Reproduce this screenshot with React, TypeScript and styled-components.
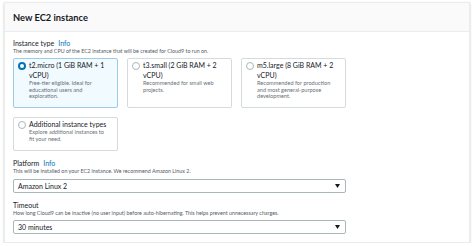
import React from "react";
import styled, { createGlobalStyle } from "styled-components";

const Global = createGlobalStyle`
  html, body { margin: 0; padding: 0; background: #ffffff; }
  body { font-family: Lato, "Open Sans", Arial, sans-serif; color: #16191f; }
  * { box-sizing: border-box; }
`;

const Card = styled.div`
  margin: 2px 4px 0 4px;
  width: 466px;
  border: 1px solid #eaeded;
  box-shadow: 0 1px 2px rgba(0, 28, 36, 0.25);
  background: #fff;
  display: flex;
  flex-direction: column;
`;

const Header = styled.div`
  height: 29px;
  background: #fafafa;
  border-bottom: 1px solid #eaeded;
  padding: 0 8px;
  display: flex;
  align-items: center;
`;

const Title = styled.h2`
  margin: 0;
  font-size: 9.3px;
  font-weight: 700;
  color: #16191f;
`;

const Body = styled.div`
  padding: 7px 8px 8px 8px;
  display: flex;
  flex-direction: column;
`;

const Field = styled.div<{ $mt?: number }>`
  display: flex;
  flex-direction: column;
  margin-top: ${(p) => p.$mt ?? 0}px;
`;

const Label = styled.div`
  font-size: 7px;
  line-height: 8px;
  height: 8px;
  color: #16191f;
  display: flex;
  gap: 4px;
`;

const Info = styled.span`
  color: #0073bb;
`;

const Desc = styled.div`
  margin-top: 1px;
  font-size: 5.35px;
  line-height: 7px;
  height: 7px;
  color: #545b64;
  white-space: nowrap;
`;

const Tiles = styled.div`
  display: grid;
  grid-template-columns: repeat(3, 105px);
  column-gap: 9px;
  row-gap: 9px;
  margin-top: 3px;
`;

const Tile = styled.div<{ $selected?: boolean; $h: number }>`
  height: ${(p) => p.$h}px;
  border: 1px solid ${(p) => (p.$selected ? "#9ccbea" : "#d5dbdb")};
  background: ${(p) => (p.$selected ? "#f1faff" : "#fff")};
  border-radius: 2px;
  padding: 1px 10px 0 4px;
  display: flex;
  gap: 3px;
`;

const Radio = styled.span<{ $checked?: boolean }>`
  flex: none;
  width: 8px;
  height: 8px;
  margin-top: 1.5px;
  border-radius: 50%;
  border: ${(p) => (p.$checked ? "2.5px solid #0073bb" : "1px solid #aab7b8")};
  background: #fff;
`;

const TileText = styled.div`
  display: flex;
  flex-direction: column;
`;

const TileTitle = styled.div`
  font-size: 7px;
  line-height: 10px;
  color: #16191f;
`;

const TileDesc = styled.div`
  font-size: 5.6px;
  line-height: 6.7px;
  color: #687078;
`;

const Select = styled.div<{ $mt: number }>`
  width: 333px;
  height: 14px;
  margin-top: ${(p) => p.$mt}px;
  border: 1px solid #aab7b8;
  border-radius: 2px;
  padding: 0 5px 0 4px;
  display: flex;
  align-items: center;
  justify-content: space-between;
  font-size: 7px;
  color: #16191f;
`;

const Arrow = styled.svg`
  width: 5px;
  height: 4px;
  fill: #16191f;
`;

type TileData = { title: string; desc: string; selected?: boolean };

const tiles: TileData[] = [
  { title: "t2.micro (1 GiB RAM + 1 vCPU)", desc: "Free-tier eligible. Ideal for educational users and exploration.", selected: true },
  { title: "t3.small (2 GiB RAM + 2 vCPU)", desc: "Recommended for small web projects." },
  { title: "m5.large (8 GiB RAM + 2 vCPU)", desc: "Recommended for production and most general-purpose development." },
  { title: "Additional instance types", desc: "Explore additional instances to fit your need." },
];

const Caret = () => (
  <Arrow viewBox="0 0 5 4">
    <polygon points="0,0 5,0 2.5,4" />
  </Arrow>
);

export default function App() {
  return (
    <>
      <Global />
      <Card>
        <Header>
          <Title>New EC2 instance</Title>
        </Header>
        <Body>
          <Field>
            <Label>
              Instance type <Info>Info</Info>
            </Label>
            <Desc>The memory and CPU of the EC2 instance that will be created for Cloud9 to run on.</Desc>
            <Tiles>
              {tiles.map((t, i) => (
                <Tile key={t.title} $selected={t.selected} $h={i < 3 ? 50 : 34}>
                  <Radio $checked={t.selected} />
                  <TileText>
                    <TileTitle>{t.title}</TileTitle>
                    <TileDesc>{t.desc}</TileDesc>
                  </TileText>
                </Tile>
              ))}
            </Tiles>
          </Field>
          <Field $mt={8}>
            <Label>
              Platform <Info>Info</Info>
            </Label>
            <Desc>This will be installed on your EC2 instance. We recommend Amazon Linux 2.</Desc>
            <Select $mt={4}>
              Amazon Linux 2<Caret />
            </Select>
          </Field>
          <Field $mt={8}>
            <Label>Timeout</Label>
            <Desc>How long Cloud9 can be inactive (no user input) before auto-hibernating. This helps prevent unnecessary charges.</Desc>
            <Select $mt={3}>
              30 minutes<Caret />
            </Select>
          </Field>
        </Body>
      </Card>
    </>
  );
}
